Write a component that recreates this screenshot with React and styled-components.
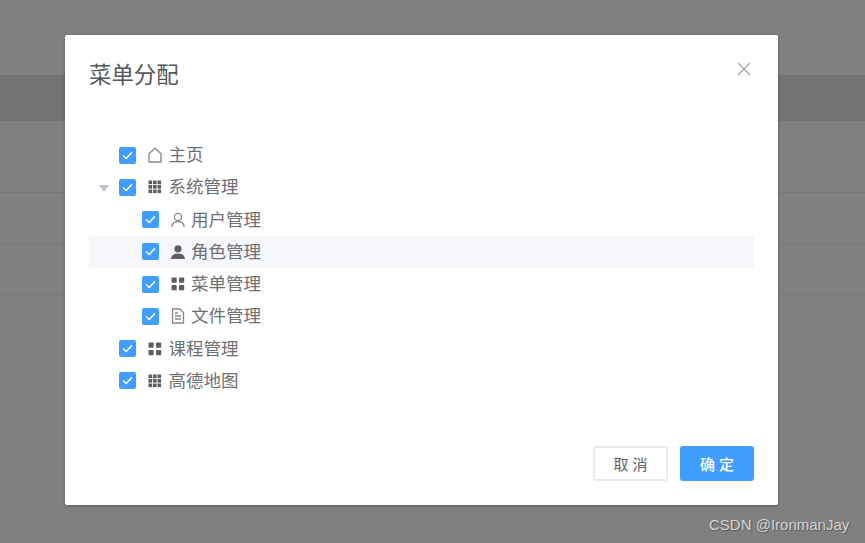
import React from "react";
import styled, { createGlobalStyle } from "styled-components";

const GlobalStyle = createGlobalStyle`
    html, body {
        margin: 0;
        padding: 0;
        height: 100%;
        overflow: hidden;
        background: #808080;
        font-family: "Liberation Sans", "Noto Sans CJK SC", sans-serif;
    }
`;

const HouseIcon = () => (
    <svg width="16" height="16" viewBox="0 0 16 16" fill="none" stroke="#85878b" strokeWidth="1.3">
        <path d="M2 6.8 L8 1.3 L14 6.8 V15 H2 Z" strokeLinejoin="round" />
    </svg>
);

const GridIcon = () => (
    <svg width="16" height="16" viewBox="0 0 16 16" fill="#5c5e62">
        {[1.5, 6, 10.5].map(y =>
            [1.5, 6, 10.5].map(x => <rect key={`${x}-${y}`} x={x} y={y} width="3.6" height="3.6" />)
        )}
    </svg>
);

const MenuIcon = () => (
    <svg width="16" height="16" viewBox="0 0 16 16" fill="#5c5e62">
        <rect x="1.5" y="1.5" width="5.2" height="5.2" rx="0.8" />
        <rect x="9" y="1.5" width="5.2" height="5.2" rx="0.8" />
        <rect x="1.5" y="9" width="5.2" height="5.2" rx="0.8" />
        <rect x="9" y="9" width="5.2" height="5.2" rx="0.8" />
    </svg>
);

const UserIcon = () => (
    <svg width="16" height="16" viewBox="0 0 16 16" fill="none" stroke="#85878b" strokeWidth="1.3">
        <circle cx="8" cy="5" r="3.6" />
        <path d="M1.8 15 C2.2 11.2 4.8 9.6 8 9.6 C11.2 9.6 13.8 11.2 14.2 15" />
    </svg>
);

const UserSolidIcon = () => (
    <svg width="16" height="16" viewBox="0 0 16 16" fill="#5c5e62">
        <circle cx="8" cy="4.8" r="3.6" />
        <path d="M1 15 C1.4 11 4.2 9.4 8 9.4 C11.8 9.4 14.6 11 15 15 Z" />
    </svg>
);

const DocumentIcon = () => (
    <svg width="16" height="16" viewBox="0 0 16 16" fill="none" stroke="#85878b" strokeWidth="1.3">
        <path d="M2.5 1 H10 L13.5 4.6 V15 H2.5 Z" strokeLinejoin="round" />
        <path d="M5 8 H11 M5 11 H11 M5 5 H8" />
    </svg>
);

const MENU_ITEMS = [
    { id: 1, label: "主页", level: 0, icon: <HouseIcon /> },
    { id: 2, label: "系统管理", level: 0, icon: <GridIcon />, expanded: true },
    { id: 3, label: "用户管理", level: 1, icon: <UserIcon /> },
    { id: 4, label: "角色管理", level: 1, icon: <UserSolidIcon />, hovered: true },
    { id: 5, label: "菜单管理", level: 1, icon: <MenuIcon /> },
    { id: 6, label: "文件管理", level: 1, icon: <DocumentIcon /> },
    { id: 7, label: "课程管理", level: 0, icon: <MenuIcon /> },
    { id: 8, label: "高德地图", level: 0, icon: <GridIcon /> },
];

const App = () => {
    return (
    <>
        <GlobalStyle />
        <Page>
            <BackRow $height={75} />
            <BackRow $height={46} $dark />
            <BackRow $height={72} $line />
            <BackRow $height={52} $line />
            <BackRow $height={50} $line />
        </Page>

        <Dialog>
            <DialogHeader>
                <DialogTitle>菜单分配</DialogTitle>
                <CloseButton aria-label="close">
                    <svg width="14" height="14" viewBox="0 0 14 14" stroke="#a0a3a9" strokeWidth="1.4" fill="none">
                        <path d="M1 1 L13 13 M13 1 L1 13" />
                    </svg>
                </CloseButton>
            </DialogHeader>

            <Tree>
                {MENU_ITEMS.map(item => {
                    return (
                    <TreeRow key={item.id} $level={item.level} $hovered={item.hovered}>
                        <CaretSlot>{item.expanded && <Caret />}</CaretSlot>
                        <Checkbox>
                            <svg width="11" height="9" viewBox="0 0 11 9" fill="none" stroke="#fff" strokeWidth="1.4">
                                <path d="M1 4.5 L4.2 7.5 L10 1.2" />
                            </svg>
                        </Checkbox>
                        <IconSlot>{item.icon}</IconSlot>
                        <RowLabel>{item.label}</RowLabel>
                    </TreeRow>
                    );
                })}
            </Tree>

            <DialogFooter>
                <FooterButton>取 消</FooterButton>
                <FooterButton $primary>确 定</FooterButton>
            </DialogFooter>
        </Dialog>

        <Watermark>CSDN @IronmanJay</Watermark>
    </>
    );
}

const Page = styled.div`
    display: flex;
    flex-direction: column;
    width: 865px;
    height: 543px;
    background-color: #808080;
`;

const BackRow = styled.div`
    box-sizing: border-box;
    height: ${props => props.$height}px;
    background-color: ${props => props.$dark ? "#737373" : "transparent"};
    border-bottom: ${props => props.$line ? "1px solid #787878" : "none"};
`;

const Dialog = styled.div`
    position: absolute;
    left: 65px;
    top: 35px;
    width: 713px;
    height: 470px;
    display: flex;
    flex-direction: column;
    background-color: #fff;
    border-radius: 2px;
    box-shadow: 0 1px 3px rgba(0, 0, 0, 0.3);
`;

const DialogHeader = styled.header`
    position: relative;
    height: 104px;
    box-sizing: border-box;
    padding: 24px 24px 0;
`;

const DialogTitle = styled.h2`
    margin: 0;
    font-size: 22.4px;
    font-weight: 400;
    line-height: 34px;
    color: #54565a;
`;

const CloseButton = styled.button`
    position: absolute;
    top: 27px;
    right: 27px;
    display: flex;
    padding: 0;
    border: 0;
    background: none;
`;

const Tree = styled.ul`
    margin: 0;
    padding: 0 24px;
    list-style: none;
    display: flex;
    flex-direction: column;
`;

const TreeRow = styled.li`
    display: flex;
    align-items: center;
    height: 32.25px;
    padding-left: ${props => props.$level * 22.5}px;
    background-color: ${props => props.$hovered ? "#f5f7fa" : "transparent"};
`;

const CaretSlot = styled.span`
    flex: none;
    width: 30px;
    display: flex;
    justify-content: flex-start;
    padding-left: 10px;
    box-sizing: border-box;
`;

const Caret = styled.span`
    width: 0;
    height: 0;
    margin-top: 2px;
    border-left: 5.5px solid transparent;
    border-right: 5.5px solid transparent;
    border-top: 7px solid #c0c4cc;
`;

const Checkbox = styled.span`
    flex: none;
    width: 17px;
    height: 17px;
    display: flex;
    align-items: center;
    justify-content: center;
    background-color: #409eff;
    border-radius: 2px;
`;

const IconSlot = styled.span`
    flex: none;
    display: flex;
    width: 16px;
    height: 16px;
    margin: 0 5.6px 0 11px;
`;

const RowLabel = styled.span`
    font-size: 17.5px;
    line-height: 20px;
    color: #6e7074;
`;

const DialogFooter = styled.footer`
    margin-top: auto;
    padding: 0 24px 24px;
    display: flex;
    justify-content: flex-end;
    gap: 12px;
`;

const FooterButton = styled.button`
    box-sizing: border-box;
    width: ${props => props.$primary ? "74px" : "75px"};
    height: 35px;
    padding: 0;
    font-family: inherit;
    font-size: 15px;
    font-weight: ${props => props.$primary ? 500 : 400};
    color: ${props => props.$primary ? "#fff" : "#606266"};
    background-color: ${props => props.$primary ? "#409eff" : "#fff"};
    border: 2px solid ${props => props.$primary ? "#409eff" : "#e8eaef"};
    border-radius: 3px;
`;

const Watermark = styled.span`
    position: absolute;
    left: 709px;
    top: 516px;
    font-size: 15px;
    line-height: 18px;
    color: #d4d4d4;
    text-shadow: 1px 1px 1px #555;
`;

export default App;
